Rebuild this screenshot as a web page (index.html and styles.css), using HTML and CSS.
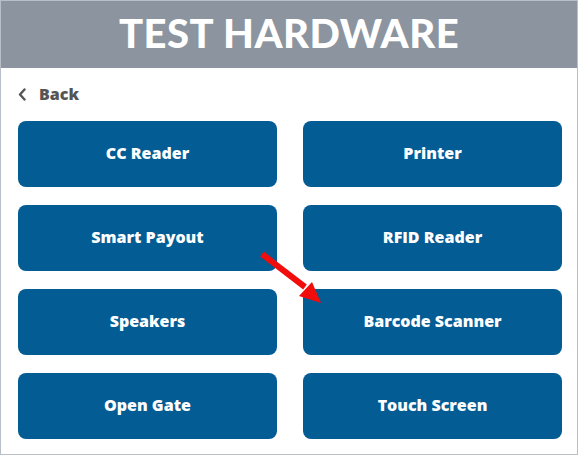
FILE: index.html
```html
<!DOCTYPE html>
<html>
<head>
<meta charset="utf-8">
<link rel="stylesheet" href="styles.css">
</head>
<body>
<div class="frame">
  <header class="header"><h1 class="title">TEST HARDWARE</h1></header>
  <div class="back">
    <svg class="chev" width="8" height="13" viewBox="0 0 8 13"><path d="M6.5 1.5 L2 6.5 L6.5 11.5" fill="none" stroke="#555" stroke-width="2.4" stroke-linecap="round" stroke-linejoin="round"/></svg>
    <span class="back-label">Back</span>
  </div>
  <div class="grid">
    <div class="btn">CC Reader</div>
    <div class="btn">Printer</div>
    <div class="btn">Smart Payout</div>
    <div class="btn">RFID Reader</div>
    <div class="btn">Speakers</div>
    <div class="btn">Barcode Scanner</div>
    <div class="btn">Open Gate</div>
    <div class="btn">Touch Screen</div>
  </div>
  <svg class="arrow" width="80" height="60" viewBox="0 0 80 60">
    <line x1="5" y1="4" x2="48" y2="37" stroke="#f20d0d" stroke-width="6"/>
    <polygon points="64,53 42,46 55,32" fill="#f20d0d"/>
  </svg>
</div>
</body>
</html>
```
FILE: styles.css
```css
html, body { margin: 0; padding: 0; background: #fff; }
.frame {
  position: relative;
  width: 576px;
  height: 453px;
  border: 1px solid #b8bfc9;
  background: #fff;
  font-family: Lato, "Open Sans", sans-serif;
}
.header {
  height: 67px;
  background: #8b949f;
  display: flex;
  align-items: center;
  justify-content: center;
}
.title {
  margin: 0;
  color: #fff;
  font-size: 40px;
  font-weight: 900;
  letter-spacing: 0.5px;
  line-height: 1;
  padding-bottom: 3px;
}
.back {
  height: 53px;
  display: flex;
  align-items: center;
  padding-left: 17px;
  gap: 13px;
  color: #555;
}
.chev { display: block; }
.back-label {
  font-family: "Open Sans", sans-serif;
  font-size: 16px;
  font-weight: 800;
  color: #555;
  line-height: 1;
  padding-bottom: 1px;
}
.grid {
  display: grid;
  grid-template-columns: 259px 259px;
  grid-auto-rows: 66px;
  column-gap: 26px;
  row-gap: 18px;
  margin-left: 17px;
}
.btn {
  background: #035c94;
  border-radius: 8px;
  color: #fff;
  font-family: "Open Sans", sans-serif;
  font-size: 16px;
  font-weight: 800;
  display: flex;
  align-items: center;
  justify-content: center;
  padding-bottom: 2px;
  box-sizing: border-box;
}
.arrow {
  position: absolute;
  left: 256px;
  top: 249px;
}
```
